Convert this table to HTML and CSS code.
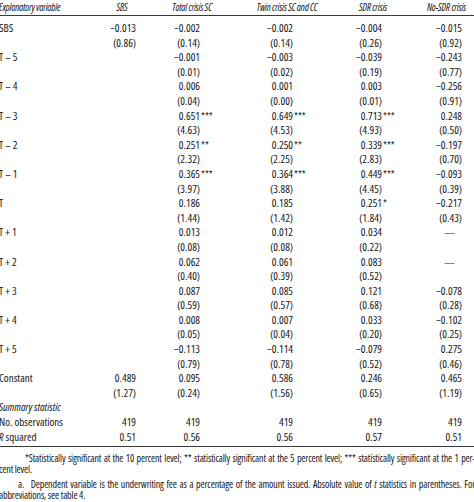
FILE: index.html
```html
<!DOCTYPE html>
<html>
<head>
<meta charset="utf-8">
<link rel="stylesheet" href="styles.css">
</head>
<body>
<div class="page">
<table class="tbl">
<colgroup>
<col class="c-label"><col class="c-n1"><col class="c-s1"><col class="c-n2"><col class="c-s2"><col class="c-n3"><col class="c-s3"><col class="c-n4"><col class="c-s4"><col class="c-n5"><col class="c-s5">
</colgroup>
<thead>
<tr>
<th class="h-label">Explanatory variable</th>
<th colspan="2">SBS</th>
<th colspan="2">Total crisis SC</th>
<th colspan="2">Twin crisis SC and CC</th>
<th colspan="2">SDR crisis</th>
<th colspan="2" class="h-last">No-SDR crisis</th>
</tr>
</thead>
<tbody>
<tr class="first"><td class="lab">SBS</td><td>−0.013</td><td class="st"></td><td>−0.002</td><td class="st"></td><td>−0.002</td><td class="st"></td><td>−0.004</td><td class="st"></td><td>−0.015</td><td class="st"></td></tr>
<tr><td class="lab"></td><td>(0.86)</td><td class="st"></td><td>(0.14)</td><td class="st"></td><td>(0.14)</td><td class="st"></td><td>(0.26)</td><td class="st"></td><td>(0.92)</td><td class="st"></td></tr>

<tr><td class="lab">T – 5</td><td></td><td class="st"></td><td>−0.001</td><td class="st"></td><td>−0.003</td><td class="st"></td><td>−0.039</td><td class="st"></td><td>−0.243</td><td class="st"></td></tr>
<tr><td class="lab"></td><td></td><td class="st"></td><td>(0.01)</td><td class="st"></td><td>(0.02)</td><td class="st"></td><td>(0.19)</td><td class="st"></td><td>(0.77)</td><td class="st"></td></tr>

<tr><td class="lab">T – 4</td><td></td><td class="st"></td><td>0.006</td><td class="st"></td><td>0.001</td><td class="st"></td><td>0.003</td><td class="st"></td><td>−0.256</td><td class="st"></td></tr>
<tr><td class="lab"></td><td></td><td class="st"></td><td>(0.04)</td><td class="st"></td><td>(0.00)</td><td class="st"></td><td>(0.01)</td><td class="st"></td><td>(0.91)</td><td class="st"></td></tr>

<tr><td class="lab">T – 3</td><td></td><td class="st"></td><td>0.651</td><td class="st">***</td><td>0.649</td><td class="st">***</td><td>0.713</td><td class="st">***</td><td>0.248</td><td class="st"></td></tr>
<tr><td class="lab"></td><td></td><td class="st"></td><td>(4.63)</td><td class="st"></td><td>(4.53)</td><td class="st"></td><td>(4.93)</td><td class="st"></td><td>(0.50)</td><td class="st"></td></tr>

<tr><td class="lab">T – 2</td><td></td><td class="st"></td><td>0.251</td><td class="st">**</td><td>0.250</td><td class="st">**</td><td>0.339</td><td class="st">***</td><td>−0.197</td><td class="st"></td></tr>
<tr><td class="lab"></td><td></td><td class="st"></td><td>(2.32)</td><td class="st"></td><td>(2.25)</td><td class="st"></td><td>(2.83)</td><td class="st"></td><td>(0.70)</td><td class="st"></td></tr>

<tr><td class="lab">T – 1</td><td></td><td class="st"></td><td>0.365</td><td class="st">***</td><td>0.364</td><td class="st">***</td><td>0.449</td><td class="st">***</td><td>−0.093</td><td class="st"></td></tr>
<tr><td class="lab"></td><td></td><td class="st"></td><td>(3.97)</td><td class="st"></td><td>(3.88)</td><td class="st"></td><td>(4.45)</td><td class="st"></td><td>(0.39)</td><td class="st"></td></tr>

<tr><td class="lab">T</td><td></td><td class="st"></td><td>0.186</td><td class="st"></td><td>0.185</td><td class="st"></td><td>0.251</td><td class="st">*</td><td>−0.217</td><td class="st"></td></tr>
<tr><td class="lab"></td><td></td><td class="st"></td><td>(1.44)</td><td class="st"></td><td>(1.42)</td><td class="st"></td><td>(1.84)</td><td class="st"></td><td>(0.43)</td><td class="st"></td></tr>

<tr><td class="lab">T + 1</td><td></td><td class="st"></td><td>0.013</td><td class="st"></td><td>0.012</td><td class="st"></td><td>0.034</td><td class="st"></td><td class="dash">—</td><td class="st"></td></tr>
<tr><td class="lab"></td><td></td><td class="st"></td><td>(0.08)</td><td class="st"></td><td>(0.08)</td><td class="st"></td><td>(0.22)</td><td class="st"></td><td></td><td class="st"></td></tr>

<tr><td class="lab">T + 2</td><td></td><td class="st"></td><td>0.062</td><td class="st"></td><td>0.061</td><td class="st"></td><td>0.083</td><td class="st"></td><td class="dash">—</td><td class="st"></td></tr>
<tr><td class="lab"></td><td></td><td class="st"></td><td>(0.40)</td><td class="st"></td><td>(0.39)</td><td class="st"></td><td>(0.52)</td><td class="st"></td><td></td><td class="st"></td></tr>

<tr><td class="lab">T + 3</td><td></td><td class="st"></td><td>0.087</td><td class="st"></td><td>0.085</td><td class="st"></td><td>0.121</td><td class="st"></td><td>−0.078</td><td class="st"></td></tr>
<tr><td class="lab"></td><td></td><td class="st"></td><td>(0.59)</td><td class="st"></td><td>(0.57)</td><td class="st"></td><td>(0.68)</td><td class="st"></td><td>(0.28)</td><td class="st"></td></tr>

<tr><td class="lab">T + 4</td><td></td><td class="st"></td><td>0.008</td><td class="st"></td><td>0.007</td><td class="st"></td><td>0.033</td><td class="st"></td><td>−0.102</td><td class="st"></td></tr>
<tr><td class="lab"></td><td></td><td class="st"></td><td>(0.05)</td><td class="st"></td><td>(0.04)</td><td class="st"></td><td>(0.20)</td><td class="st"></td><td>(0.25)</td><td class="st"></td></tr>

<tr><td class="lab">T + 5</td><td></td><td class="st"></td><td>−0.113</td><td class="st"></td><td>−0.114</td><td class="st"></td><td>−0.079</td><td class="st"></td><td>0.275</td><td class="st"></td></tr>
<tr><td class="lab"></td><td></td><td class="st"></td><td>(0.79)</td><td class="st"></td><td>(0.78)</td><td class="st"></td><td>(0.52)</td><td class="st"></td><td>(0.46)</td><td class="st"></td></tr>

<tr><td class="lab">Constant</td><td>0.489</td><td class="st"></td><td>0.095</td><td class="st"></td><td>0.586</td><td class="st"></td><td>0.246</td><td class="st"></td><td>0.465</td><td class="st"></td></tr>
<tr><td class="lab"></td><td>(1.27)</td><td class="st"></td><td>(0.24)</td><td class="st"></td><td>(1.56)</td><td class="st"></td><td>(0.65)</td><td class="st"></td><td>(1.19)</td><td class="st"></td></tr>

<tr><td class="lab sec" colspan="11">Summary statistic</td></tr>
<tr><td class="lab">No. observations</td><td>419</td><td class="st"></td><td>419</td><td class="st"></td><td>419</td><td class="st"></td><td>419</td><td class="st"></td><td>419</td><td class="st"></td></tr>
<tr class="last"><td class="lab"><i>R</i> squared</td><td>0.51</td><td class="st"></td><td>0.56</td><td class="st"></td><td>0.56</td><td class="st"></td><td>0.57</td><td class="st"></td><td>0.51</td><td class="st"></td></tr>
</tbody>
</table>

<div class="notes">
<p class="note"><span class="full ind1">*Statistically significant at the 10 percent level; ** statistically significant at the 5 percent level; *** statistically significant at the 1 per-</span><span class="end">cent level.</span></p>
<p class="note"><span class="full ind2"><span class="tag">a.</span> Dependent variable is the underwriting fee as a percentage of the amount issued. Absolute value of <i>t</i> statistics in parentheses. For</span><span class="end">abbreviations, see table 4.</span></p>
</div>
</div>
</body>
</html>
```

FILE: styles.css
```css
html, body {
  margin: 0;
  padding: 0;
  background: #ffffff;
  overflow: hidden;
}

.page {
  width: 475px;
  margin-left: -1px;
  font-family: "Open Sans", "DejaVu Sans Condensed", sans-serif;
  font-stretch: 75%;
  font-weight: 450;
  color: #141414;
}

.tbl {
  border-collapse: collapse;
  table-layout: fixed;
  width: 475px;
  font-size: 11px;
}

.c-label { width: 97px; }
.c-n1 { width: 40px; }
.c-s1 { width: 12px; }
.c-n2 { width: 52px; }
.c-s2 { width: 36px; }
.c-n3 { width: 57px; }
.c-s3 { width: 45px; }
.c-n4 { width: 44px; }
.c-s4 { width: 26px; }
.c-n5 { width: 54px; }
.c-s5 { width: 12px; }

.tbl th {
  font-weight: 450;
  font-style: italic;
  font-size: 10px;
  letter-spacing: -0.2px;
  line-height: 15px;
  height: 15px;
  padding: 0;
  text-align: center;
  white-space: nowrap;
  border-bottom: 1px solid #3a3a3a;
}

.tbl th.h-label {
  text-align: left;
}

.tbl th.h-last {
  text-align: right;
  padding-right: 8px;
}

.tbl td {
  padding: 0;
  line-height: 14.6px;
  height: 14.6px;
  text-align: right;
  white-space: nowrap;
}

.tbl td.lab {
  text-align: left;
}

.tbl td.sec {
  font-style: italic;
}

.tbl td.st {
  text-align: left;
  padding-left: 1px;
  font-size: 10px;
}

.tbl td.dash {
  padding-right: 7px;
}

.tbl tr.first td {
  padding-top: 5px;
}

.tbl tr.last td {
  padding-bottom: 2px;
  border-bottom: 1px solid #3a3a3a;
}

.notes {
  margin-top: 6px;
  font-size: 10px;
  letter-spacing: -0.15px;
  line-height: 11px;
  width: 476px;
}

.note {
  margin: 0 0 4px 0;
}

.full {
  display: block;
  text-align: justify;
  text-align-last: justify;
  white-space: nowrap;
}

.end {
  display: block;
}

.ind1 {
  padding-left: 26px;
}

.ind2 {
  padding-left: 19px;
}

.tag {
  margin-right: 4px;
}
```
